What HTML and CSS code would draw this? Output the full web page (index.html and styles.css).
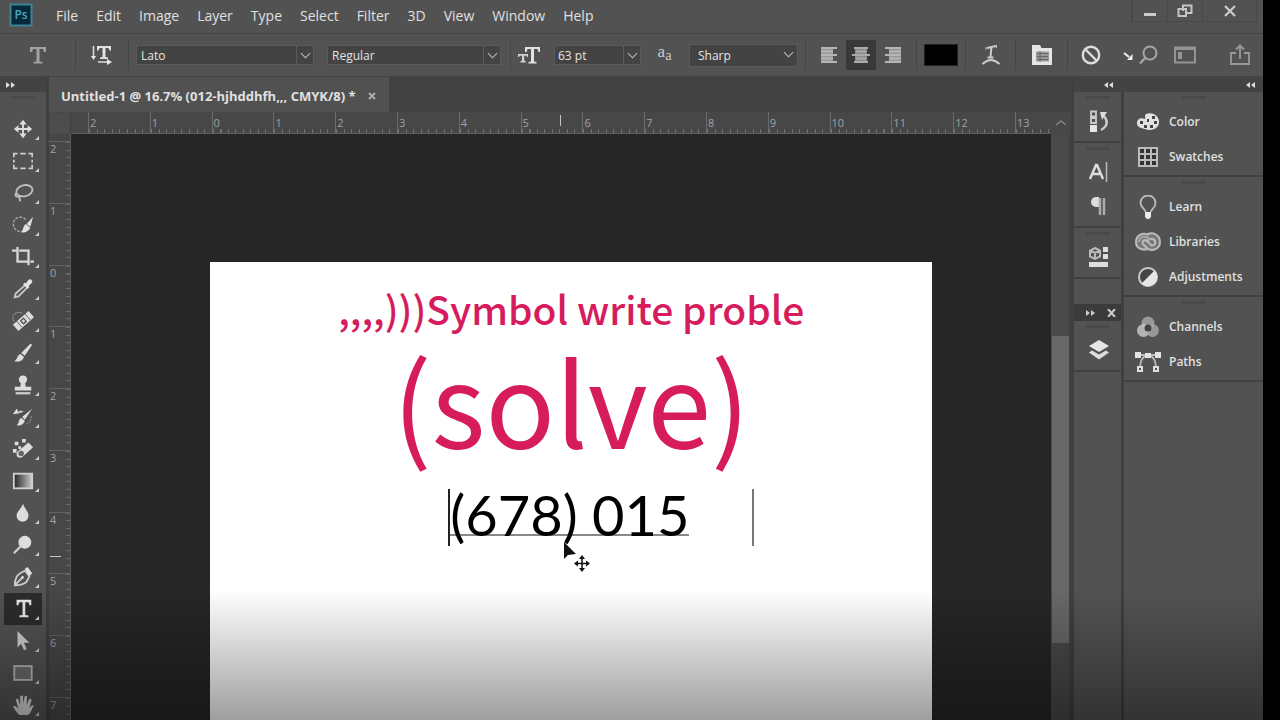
FILE: index.html
```html
<!DOCTYPE html>
<html lang="en">
<head>
<meta charset="utf-8">
<title>Untitled-1 @ 16.7%</title>
<link rel="stylesheet" href="styles.css">
</head>
<body>
<div class="app">
  <header class="menubar">
    <svg class="logo" width="24" height="24" viewBox="0 0 24 24"><rect x="1.500" y="1.500" width="21" height="21" fill="#07283a" stroke="#3d8299" stroke-width="2"/><text x="12" y="16" text-anchor="middle" class="logo-text">Ps</text></svg>
    <nav class="menus">
      <button>File</button><button>Edit</button><button>Image</button><button>Layer</button><button>Type</button><button>Select</button><button>Filter</button><button>3D</button><button>View</button><button>Window</button><button>Help</button>
    </nav>
    <div class="window-buttons">
      <button aria-label="Minimize"><svg width="14" height="14" viewBox="0 0 14 14"><path d="M1 9h12v3H1z" fill="#ccc"/></svg></button>
      <button aria-label="Restore"><svg width="16" height="14" viewBox="0 0 16 14"><path d="M6 7V1.500h8.500V9H10M1.500 5H9v7H1.500z" fill="none" stroke="#c4c4c4" stroke-width="2"/></svg></button>
      <button aria-label="Close"><svg width="14" height="14" viewBox="0 0 14 14"><path d="M2 2l10 10M12 2L2 12" stroke="#ccc" stroke-width="2.200"/></svg></button>
    </div>
  </header>

  <div class="options">
    <div class="cell"><svg width="18" height="20" viewBox="0 0 18 20"><path d="M1 2h16v5h-2L14 4h-3.500v12.500l3 .5v1.500h-9V17l3-.5V4H4L3 7H1z" fill="#a2a2a2"/></svg></div>
    <div class="cell"><svg width="22" height="20" viewBox="0 0 22 20"><path d="M6 1h14v4.500h-1.500L17.500 3H14.500v9l2.500.5V14H9v-1.500l2.500-.5V3h-3l-1 2.500H6z" fill="#e0e0e0"/><path d="M2.500 1v11M7 17h10" stroke="#ddd" stroke-width="1.500"/><path d="M0 11h5l-2.500 4zM16 14l5 3-5 3z" fill="#e8e8e8"/></svg></div>
    <div class="cell plain start"><span class="combo combo-font"><select aria-label="Font family"><option>Lato</option></select><i></i></span></div>
    <div class="cell start"><span class="combo combo-style"><select aria-label="Font style"><option>Regular</option></select><i></i></span></div>
    <div class="cell plain"><svg width="22" height="19" viewBox="0 0 22 19"><path d="M7 1h15v5h-1.500l-1-3H16v12.500l2.500.5v1.500h-8V16l2.500-.5V3H9.500l-1 3H7z" fill="#e2e2e2"/><path d="M0 8h10v3H9L8.500 9.800H6.200v5l1.500.3v1.400H2.500v-1.400l1.500-.3v-5H1.700L1 11H0z" fill="#d0d0d0"/></svg></div>
    <div class="cell plain start"><span class="combo combo-size"><select aria-label="Font size"><option>63 pt</option></select><i></i></span></div>
    <div class="cell plain aa"><span>a</span><sub>a</sub></div>
    <div class="cell start narrow"><span class="combo combo-sharp"><select aria-label="Anti-aliasing"><option>Sharp</option></select><i></i></span></div>
    <div class="cell aligns">
      <button aria-label="Left align"><svg width="18" height="18" viewBox="0 0 18 18"><rect x="1" y="1" width="12" height="16" fill="#999"/><path d="M1 2h16M1 5.500h12M1 9h16M1 12.500h12M1 16h16" stroke="#b5b5b5" stroke-width="2"/></svg></button>
      <button class="on" aria-label="Center align"><svg width="18" height="18" viewBox="0 0 18 18"><rect x="3" y="1" width="12" height="16" fill="#8c8c8c"/><path d="M2 2h14M4 5.500h10M0 9h18M4 12.500h10M2 16h14" stroke="#aaa" stroke-width="2"/></svg></button>
      <button aria-label="Right align"><svg width="18" height="18" viewBox="0 0 18 18"><rect x="5" y="1" width="12" height="16" fill="#999"/><path d="M1 2h16M5 5.500h12M1 9h16M5 12.500h12M1 16h16" stroke="#b5b5b5" stroke-width="2"/></svg></button>
    </div>
    <div class="cell"><button class="swatch" aria-label="Text color"></button></div>
    <div class="cell"><svg width="20" height="22" viewBox="0 0 20 22"><path d="M6 4l9-2M10.500 3l-1 10M6.500 13.500h6" fill="none" stroke="#ccc" stroke-width="2"/><path d="M5 3v3M15.500 1v3" stroke="#bbb"/><path d="M1.500 20q8.500-8 17 0" fill="none" stroke="#ccc" stroke-width="2"/></svg></div>
    <div class="cell"><svg width="22" height="22" viewBox="0 0 22 22"><path d="M1 1h8l1.500 3H21v17H1z" fill="#e6e6e6"/><rect x="5" y="7.500" width="13" height="10" fill="#999"/><path d="M6 9.500h11M6 12.500h11M6 15.500h11M9 7v11" stroke="#666"/></svg></div>
    <div class="cell plain"><svg width="20" height="20" viewBox="0 0 20 20"><circle cx="10" cy="10" r="8.200" fill="none" stroke="#ddd" stroke-width="2.400"/><path d="M4.500 4.500l11 11" stroke="#ddd" stroke-width="2.400"/></svg></div>
    <div class="tail">
      <svg width="10" height="10" viewBox="0 0 10 10"><path d="M1 3l5 4" stroke="#eee" stroke-width="2.200"/><path d="M9.500 4v6H4z" fill="#eee"/></svg>
      <svg width="20" height="20" viewBox="0 0 20 20"><circle cx="12" cy="8" r="6.500" fill="none" stroke="#a5a5a5" stroke-width="2"/><path d="M7.500 12.500L2 18.500" stroke="#a5a5a5" stroke-width="2.500"/></svg>
      <svg class="ws" width="22" height="18" viewBox="0 0 22 18"><rect x="1" y="1.500" width="20" height="15" fill="none" stroke="#949494" stroke-width="2"/><path d="M1 2.500h20" stroke="#949494" stroke-width="3"/><rect x="4" y="6" width="4" height="7" fill="#949494"/></svg>
      <svg class="share" width="20" height="22" viewBox="0 0 20 22"><path d="M6 9H1v11h18V9h-5M10 15V2M6 5.500l4-4 4 4" fill="none" stroke="#999" stroke-width="1.800"/></svg>
    </div>
  </div>

  <div class="workspace">
    <aside class="toolbar">
      <div class="strip"><svg width="9" height="6" viewBox="0 0 9 6"><path d="M0 0l4 3-4 3zM5 0l4 3-4 3z" fill="#ddd"/></svg></div>
      <div class="tools">
        <button aria-label="Move"><svg viewBox="0 0 24 24"><path d="M12 4v16M4 12h16" stroke="#ddd" stroke-width="2"/><path d="M12 2l4 5H8zM12 22l4-5H8zM2 12l5-4v8zM22 12l-5-4v8z" fill="#ddd"/></svg></button>
        <button aria-label="Marquee"><svg viewBox="0 0 24 24"><path d="M2 8V4h4M9 4h6M18 4h4v4M22 10.500v3M22 16v4h-4M15 20H9M6 20H2v-4M2 13.500v-3" fill="none" stroke="#ccc" stroke-width="1.800"/></svg></button>
        <button aria-label="Lasso"><svg viewBox="0 0 24 24"><ellipse cx="13.500" cy="9.500" rx="9" ry="6" transform="rotate(-14 13.500 9.500)" fill="none" stroke="#c0c0c0" stroke-width="2"/><path d="M5 12c-3 3 0 5 3 3M7 15c2 2 1 4 2 6" fill="none" stroke="#c0c0c0" stroke-width="2"/></svg></button>
        <button aria-label="Quick selection"><svg viewBox="0 0 24 24"><path d="M15 6C10 1 1 4 1.500 11c0 6 5 9 10 8" fill="none" stroke="#aaa" stroke-width="1.500" stroke-dasharray="3 1.500"/><path d="M23 3l-3 11-4-3zM15 11l5 4c-2 4-6 6-10 5 2-1 2-7 5-9z" fill="#e2e2e2"/></svg></button>
        <button aria-label="Crop"><svg viewBox="0 0 24 24"><path d="M6 1v16h11M0 5h5M8 5h10v16M20 17h4" fill="none" stroke="#d8d8d8" stroke-width="2.500"/></svg></button>
        <button aria-label="Eyedropper"><svg viewBox="0 0 24 24"><path d="M14 8L4 17l-1 4 4-1 9-9" fill="none" stroke="#c8c8c8" stroke-width="2"/><path d="M12 7l2-2 1 1 3-4c2-2 5 1 4 3l-4 4 1 1-2 2z" fill="#e2e2e2"/></svg></button>
        <button aria-label="Healing brush"><svg viewBox="0 0 24 24"><path d="M2 12c-4-7 4-12 10-8" fill="none" stroke="#aaa" stroke-dasharray="2 1"/><path d="M18 1l6 7L7 23l-6-7z" fill="#ddd"/><path d="M14 4l6 7M5 12l6 7" stroke="#555"/><path d="M12.500 8l4 4.500-4 3.500-4-4z" fill="#555"/><path d="M12.500 10l2 2-2 2-2-2z" fill="#ddd"/></svg></button>
        <button aria-label="Brush"><svg viewBox="0 0 24 24"><path d="M20 2l2 1-8 12-4-3zM9 13l4 3c-1 5-6 6-11 5 4-1 3-6 7-8z" fill="#ddd"/></svg></button>
        <button aria-label="Clone stamp"><svg viewBox="0 0 24 24"><circle cx="12" cy="6" r="4.500" fill="#ddd"/><path d="M10 8h4l1 6h6v4H3v-4h6z" fill="#ddd"/><path d="M4 21h16" stroke="#ccc" stroke-width="2.500"/></svg></button>
        <button aria-label="History brush"><svg viewBox="0 0 24 24"><path d="M22 3l-8 12-3-3zM10 13l4 3c-1 4-5 6-9 5 3-2 2-7 5-8zM1 9l4-6 3 5zM8 5l5 1-5 2z" fill="#ddd"/><path d="M21 11c0 5-2 8-6 9" fill="none" stroke="#999" stroke-dasharray="2 1"/></svg></button>
        <button aria-label="Eraser"><svg viewBox="0 0 24 24"><path d="M18 5l5 5-12 11c-4 2-8-2-5-6z" fill="#ddd"/><circle cx="10" cy="17" r="3" fill="#666"/><path d="M1 12h4v4H1zM3 4h4v4H3zM11 1h4v4h-4zM7 9h3v3H7z" fill="#ddd"/></svg></button>
        <button aria-label="Gradient"><svg viewBox="0 0 24 24"><defs><linearGradient id="g"><stop offset="0" stop-color="#222"/><stop offset="1" stop-color="#ccc"/></linearGradient></defs><rect x="2" y="4" width="20" height="16" fill="url(#g)" stroke="#d0d0d0" stroke-width="2"/></svg></button>
        <button aria-label="Blur"><svg viewBox="0 0 24 24"><path d="M12 2c2 6 6 8 6 13a6.500 6.500 0 0 1-13 0c0-5 5-7 7-13z" fill="#ddd"/></svg></button>
        <button aria-label="Dodge"><svg viewBox="0 0 24 24"><circle cx="14" cy="9" r="7" fill="#ddd"/><path d="M10 13l-8 8" stroke="#ccc" stroke-width="2.500"/></svg></button>
        <button aria-label="Pen"><svg viewBox="0 0 24 24"><path d="M3 21c0-6 1-10 6-13l5-3 5 6-3 6c-3 3-7 4-13 4zM3 21l8-8" fill="none" stroke="#ccc" stroke-width="2"/><path d="M14 3l3-2 5 7-3 3z" fill="#e2e2e2"/><circle cx="11.500" cy="12.500" r="1.500" fill="#ddd"/></svg></button>
        <button class="on" aria-label="Type"><svg viewBox="0 0 24 24"><path d="M5 2h16v6h-2L18 4.500h-3.500v14l3.500.5v2H8v-2l3.500-.5v-14H8L7 8H5z" fill="#e6e6e6"/></svg></button>
        <button aria-label="Path selection"><svg viewBox="0 0 24 24"><path d="M6 1v18l4-4 3 7 3-1-3-7h6z" fill="#d0d0d0"/></svg></button>
        <button aria-label="Rectangle"><svg viewBox="0 0 24 24"><rect x="2.500" y="4.500" width="19" height="15" fill="#6b6b6b" stroke="#bbb" stroke-width="2"/></svg></button>
        <button aria-label="Hand"><svg viewBox="0 0 24 24"><path d="M8 23c-3-3-5-6-7-9 2-2 4 0 6 2L4 6l2.500-1L9 12V2h3v9l2-9 2.500.5L16 12l3-7 2.500 1L19 15l3-3 2 1c-3 3-3 8-7 10z" fill="#d6d6d6"/></svg></button>
      </div>
    </aside>

    <main class="document">
      <div class="tabs">
        <div class="tab"><span>Untitled-1 @ 16.7% (012-hjhddhfh,,, CMYK/8) *</span><button aria-label="Close tab"><svg width="8" height="8" viewBox="0 0 8 8"><path d="M1 1l6 6M7 1L1 7" stroke="#aaa" stroke-width="2"/></svg></button></div>
      </div>
      <div class="view">
        <div class="corner"></div>
        <div class="ruler-x"><span>2</span><span>1</span><span>0</span><span>1</span><span>2</span><span>3</span><span>4</span><span class="cursor-x">5</span><span>6</span><span>7</span><span>8</span><span>9</span><span>10</span><span>11</span><span>12</span><span>13</span></div>
        <div class="scroll-top"><svg width="12" height="6" viewBox="0 0 12 6"><path d="M1 5l5-4 5 4" fill="none" stroke="#858585" stroke-width="1.500"/></svg></div>
        <div class="ruler-y"><span>2</span><span>1</span><span>0</span><span>1</span><span>2</span><span>3</span><span class="cursor-y">4</span><span>5</span><span>6</span><span>7</span></div>
        <div class="canvas">
          <div class="page">
            <p class="headline">,,,,)))Symbol write proble</p>
            <p class="solve">(solve)</p>
            <div class="text-box">
              <span>(678) 015</span>
              <svg class="pointer" width="28" height="34" viewBox="0 0 28 34"><path d="M1 3v17l4-4 8-1z" fill="#111"/><path d="M19 18v13M12.500 24.500h13" stroke="#111" stroke-width="1.500"/><path d="M19 16l3 4h-6zM19 33l3-4h-6zM11 24.500l4-3v6zM27 24.500l-4-3v6z" fill="#111"/></svg>
            </div>
          </div>
        </div>
        <div class="scroll"><div class="thumb"></div></div>
      </div>
    </main>

    <aside class="icon-dock">
      <div class="strip right"><svg width="9" height="6" viewBox="0 0 9 6"><path d="M4 0L0 3l4 3zM9 0L5 3l4 3z" fill="#ddd"/></svg></div>
      <div class="icon-group"><button aria-label="History"><svg width="22" height="24" viewBox="0 0 22 24"><path d="M3 2.500h5v5H3zM3 9h5v5H3z" fill="none" stroke="#ccc" stroke-width="1.800"/><path d="M2 16h7v7H2z" fill="#e6e6e6"/><path d="M13 21c7-4 7-9 3-14" fill="none" stroke="#ccc" stroke-width="2.500"/><path d="M12 3l7 0-5 8z" fill="#ddd"/></svg></button></div>
      <div class="icon-group"><button aria-label="Character"><svg width="22" height="22" viewBox="0 0 22 22"><path d="M2 18L8 4h1l6 14M4.500 13h8" fill="none" stroke="#ddd" stroke-width="2.500"/><path d="M18.500 1v20" stroke="#bbb" stroke-width="1.500"/></svg></button><button aria-label="Paragraph"><svg width="22" height="22" viewBox="0 0 22 22"><path d="M18 2H8a5 5 0 0 0 0 10h3V2z" fill="#ddd"/><path d="M12 3v17M16 3v17" stroke="#aaa" stroke-width="2.500"/></svg></button></div>
      <div class="icon-group"><button aria-label="3D"><svg width="22" height="22" viewBox="0 0 22 22"><path d="M7 2l5 2.500v6L7 13l-5-2.500v-6zM2 4.500L7 7l5-2.500M7 7v6" fill="none" stroke="#bbb" stroke-width="2"/><path d="M15 1h5v5h-5zM15 8h5v5h-5zM1 16h19v5H1z" fill="#ddd"/></svg></button></div>
      <div class="float-head"><svg width="10" height="6" viewBox="0 0 10 6"><path d="M0 0l4 3-4 3zM5 0l4 3-4 3z" fill="#ccc"/></svg><button aria-label="Close panel"><svg width="9" height="8" viewBox="0 0 9 8"><path d="M1 0l7 8M8 0L1 8" stroke="#ccc" stroke-width="2"/></svg></button></div>
      <div class="icon-group"><button aria-label="Layers"><svg width="22" height="22" viewBox="0 0 22 22"><path d="M11 1l10 6-10 6L1 7z" fill="#e6e6e6"/><path d="M1 13.500l3-2 7 4 7-4 3 2-10 7z" fill="#ddd"/></svg></button></div>
    </aside>

    <aside class="panel-dock">
      <div class="strip right"><svg width="9" height="6" viewBox="0 0 9 6"><path d="M4 0L0 3l4 3zM9 0L5 3l4 3z" fill="#ddd"/></svg></div>
      <div class="panel-group">
        <button><svg viewBox="0 0 26 24"><path d="M10 9c1-2-1-3 1-5 7-3 14 3 13 9-1 7-9 8-14 6-3-1-8-1-8-6 0-4 4-6 8-4z" fill="#e2e2e2"/><path d="M5 11h3v3H5zM9 15h3v3H9zM15 15h3v3h-3zM19 11h3v3h-3zM17 6h3v3h-3zM12 9h2v3h-2z" fill="#444"/></svg>Color</button>
        <button><svg viewBox="0 0 26 24"><rect x="3" y="2" width="20" height="20" fill="#bbb"/><path d="M5 4h4v4H5zM11 4h4v4h-4zM17 4h4v4h-4zM5 10h4v4H5zM11 10h4v4h-4zM17 10h4v4h-4zM5 16h4v4H5zM11 16h4v4h-4zM17 16h4v4h-4z" fill="#333"/></svg>Swatches</button>
      </div>
      <div class="panel-group">
        <button><svg viewBox="0 0 26 24"><path d="M10.500 17c0-3-5-4-5-9a7.500 7.500 0 0 1 15 0c0 5-4.500 6-4.500 9" fill="none" stroke="#bbb" stroke-width="1.800"/><path d="M10 17h6v5l-2 2h-2l-2-2z" fill="#eee"/></svg>Learn</button>
        <button><svg viewBox="0 0 26 24"><rect x="1" y="4" width="24" height="17" rx="8.500" fill="#777"/><path d="M13 4c5-2 12 1 12 8s-8 10-13 6l-4-4c-2-3 2-5 4-3l4 4c4 2 6-4 2-6-3-1-5 0-7 3" fill="none" stroke="#bbb" stroke-width="2"/><path d="M14 5C8 2 1 5 1 12s8 9 12 6" fill="none" stroke="#bbb" stroke-width="2"/><path d="M4 12c0-6 8-7 11-2" fill="none" stroke="#aaa" stroke-width="2"/></svg>Libraries</button>
        <button><svg viewBox="0 0 26 24"><circle cx="13" cy="12" r="9" fill="#444" stroke="#ccc" stroke-width="2"/><path d="M19.500 5.500a9 9 0 0 1-13 13z" fill="#e6e6e6"/></svg>Adjustments</button>
      </div>
      <div class="panel-group">
        <button><svg viewBox="0 0 26 24"><circle cx="13" cy="8" r="6.500" fill="#999"/><circle cx="8.500" cy="15.500" r="6.500" fill="#ccc" opacity=".8"/><circle cx="17.500" cy="15.500" r="6.500" fill="#aaa" opacity=".8"/><circle cx="13" cy="13" r="3.500" fill="#444"/></svg>Channels</button>
        <button><svg viewBox="0 0 26 24"><path d="M2 5h22M5 18C5 11 8 6 13 5c5 1 8 6 8 13" fill="none" stroke="#bbb" stroke-width="1.800"/><path d="M0 2h6v6H0zM20 2h6v6h-6zM10 3h6v5h-6z" fill="#e2e2e2"/><path d="M3 17h4v4H3zM19 17h4v4h-4z" fill="#555" stroke="#ddd" stroke-width="2"/></svg>Paths</button>
      </div>
    </aside>
  </div>
  <div class="shade"></div>
</div>
</body>
</html>
```
FILE: styles.css
```css
* { box-sizing: border-box; }
body {
  margin: 0;
  background: #000;
  color: #e0e0e0;
  font-family: "Open Sans", "Noto Sans", sans-serif;
}
button {
  margin: 0;
  padding: 0;
  border: 0;
  background: none;
  color: inherit;
  font: inherit;
}
p { margin: 0; }
svg { flex: none; display: block; }

.app {
  position: relative;
  display: flex;
  flex-direction: column;
  height: 100vh;
  margin-right: 17px;
  overflow: hidden;
  background: #525252;
}
.shade {
  position: absolute;
  inset: auto 0 0 0;
  height: 18vh;
  background: linear-gradient(transparent, rgba(0, 0, 0, .38));
  pointer-events: none;
}

/* Menu bar */
.menubar {
  display: flex;
  flex: none;
  height: 34px;
  padding-left: 9px;
  border-bottom: 1px solid #434343;
}
.logo { margin-top: 3px; }
.logo-text { font: 600 12px "Open Sans", sans-serif; fill: #4aa6bd; }
.menus {
  display: flex;
  gap: 18px;
  height: 30px;
  margin-left: 23px;
  font-size: 14px;
  font-weight: 500;
}
.window-buttons {
  display: flex;
  height: 22px;
  margin: 0 6px 0 auto;
  border: 1px solid #494949;
  border-top: 0;
}
.window-buttons button {
  display: flex;
  align-items: center;
  justify-content: center;
  width: 35px;
  border-left: 1px solid #494949;
}
.window-buttons button:last-child { width: 54px; }

/* Options bar */
.options {
  display: grid;
  grid-template-columns: 76px 53px 191px 191px 36px 97px 41px 121px 111px 49px 50px 52px 45px 1fr;
  flex: none;
  height: 43px;
  padding: 6px 0;
  border-bottom: 1px solid #444;
}
.cell {
  display: flex;
  align-items: center;
  justify-content: center;
  border-right: 1px solid #454545;
}
.cell.plain { border-right: 0; }
.cell.start { justify-content: flex-start; padding-left: 7px; }
.cell.narrow { padding-left: 4px; }
.combo { position: relative; display: flex; height: 20px; }
.combo select {
  width: 100%;
  padding: 0 4px;
  border: 1px solid #5b5b5b;
  border-radius: 0;
  appearance: none;
  background: #434343;
  color: #e4e4e4;
  font: 500 12px "Open Sans", sans-serif;
}
.combo i {
  position: absolute;
  inset: 1px 1px 1px auto;
  width: 17px;
  border-left: 1px solid #5c5c5c;
  pointer-events: none;
}
.combo i::after {
  content: "";
  position: absolute;
  left: 5px;
  top: 4px;
  width: 6px;
  height: 6px;
  border: solid #bbb;
  border-width: 0 1px 1px 0;
  transform: rotate(45deg);
}
.combo-font { width: 178px; }
.combo-style { width: 174px; }
.combo-size { width: 87px; }
.combo-sharp { width: 109px; height: 23px; }
.combo-size select { padding: 0 3px; }
.combo-sharp select { padding: 0 8px; }
.combo-sharp i { border: 0; }
.aa { color: #ccc; font: 17px "Liberation Serif", serif; }
.aa span { margin-bottom: 6px; }
.aa sub { line-height: 1; }
.aligns { gap: 2px; }
.aligns button {
  display: flex;
  align-items: center;
  justify-content: center;
  width: 30px;
  height: 30px;
}
.aligns .on { background: #393939; }
.swatch { width: 34px; height: 22px; background: #000; border: 1px solid #222; }
.tail { display: flex; align-items: center; padding-left: 10px; gap: 5px; }
.ws { margin-left: 11px; }
.share { margin-left: auto; margin-right: 13px; }

/* Workspace */
.workspace { display: flex; flex: 1; min-height: 0; background: #3f3f3f; }
.strip {
  display: flex;
  flex: none;
  align-items: center;
  height: 15px;
  padding: 0 6px;
  background: #434343;
}
.strip.right { justify-content: flex-end; padding-right: 8px; }

.toolbar { flex: none; width: 46px; margin-right: 3px; background: #525252; }
.tools { display: flex; flex-direction: column; padding-top: 21px; position: relative; }
.tools::before, .icon-group::before, .panel-group::before {
  content: "";
  position: absolute;
  top: 4px;
  left: calc(50% - 12px);
  width: 24px;
  height: 3px;
  background: #4a4a4a;
}
.tools button {
  position: relative;
  flex: none;
  display: flex;
  align-items: center;
  width: 38px;
  height: 32px;
  margin-left: 4px;
  padding-left: 8px;
}
.tools svg { width: 22px; height: 22px; }
.tools button::after {
  content: "";
  position: absolute;
  right: 3px;
  bottom: 5px;
  border: solid transparent;
  border-width: 2px;
  border-right-color: #ccc;
  border-bottom-color: #ccc;
}
.tools .on { background: #2b2b2b; }

/* Document */
.document { display: flex; flex: 1; flex-direction: column; min-width: 0; }
.tabs { display: flex; flex: none; height: 35px; background: #424242; }
.tab {
  display: flex;
  align-items: center;
  gap: 12px;
  padding: 2px 13px 0 12px;
  background: #515151;
  font-size: 13px;
  font-weight: 700;
}
.view {
  display: grid;
  grid-template-columns: 22px 1fr 20px;
  grid-template-rows: 22px 1fr;
  flex: 1;
  min-height: 0;
}
.corner { background: #4d4d4d; border: 1px solid #484848; border-right-color: #3e3e3e; }
.ruler-x, .ruler-y {
  display: flex;
  overflow: hidden;
  background: #474747;
  color: #a2a2a2;
  font-size: 11px;
}
.ruler-x { padding-left: 17px; border-bottom: 1px solid #5d5d5d; }
.ruler-x span {
  position: relative;
  flex: 1;
  padding: 4px 0 0 1px;
  border-left: 1px solid #6c6c6c;
  line-height: 14px;
  background: repeating-linear-gradient(90deg, #717171 0 1px, transparent 1px 12.5%) bottom / 100% 4px no-repeat;
}
.ruler-x span:last-child {
  flex: 0 0 36px;
  background-image: repeating-linear-gradient(90deg, #717171 0 1px, transparent 1px 8px);
}
.ruler-y { flex-direction: column; padding-top: 7px; border-right: 1px solid #5d5d5d; }
.ruler-y span {
  position: relative;
  flex: 1;
  padding-left: 1px;
  border-top: 1px solid #626262;
  line-height: 13px;
  background: repeating-linear-gradient(#6a6a6a 0 1px, transparent 1px 12.5%) right / 4px 100% no-repeat;
}
.ruler-y span:last-child {
  flex: 0 0 23px;
  background-image: repeating-linear-gradient(#6a6a6a 0 1px, transparent 1px 8px);
}
.cursor-x::after, .cursor-y::after { content: ""; position: absolute; background: #c4c4c4; }
.cursor-x::after { left: 63%; top: 3px; width: 1px; height: 11px; }
.cursor-y::after { top: 72%; left: 1px; width: 11px; height: 1px; }
.scroll-top {
  display: flex;
  align-items: center;
  justify-content: center;
  background: #484848;
}
.canvas { overflow: hidden; padding: 128px 12.1% 0 14.2%; background: #262626; }
.page { display: flex; flex-direction: column; align-items: center; height: 100%; background: #fff; }
.headline, .solve { color: #d61c5c; font-family: "Noto Sans CJK SC", sans-serif; }
.headline { margin-top: 16px; font-size: 39px; line-height: 60px; font-weight: 500; }
.solve { font-size: 115px; line-height: 122px; }
.text-box {
  position: relative;
  width: 306px;
  height: 57px;
  margin: 29px 0 0 60px;
  border-left: 2px solid #222;
  border-right: 2px solid #777;
  color: #000;
  font: 56px/52px Lato, sans-serif;
}
.text-box span {
  display: inline-block;
  height: 47px;
  border-bottom: 2px solid #888;
}
.pointer { position: absolute; left: 113px; top: 50px; }
.scroll { display: flex; background: #494949; padding: 0 0 0 1px; border-right: 2px solid #414141; }
.thumb { width: 100%; height: 52.4%; margin-top: 202px; background: #676767; }

/* Docks */
.icon-dock {
  display: flex;
  flex: none;
  flex-direction: column;
  width: 50px;
  margin-left: 3px;
  border-right: 3px solid #3f3f3f;
  background: #525252;
}
.icon-dock .strip { margin-right: -3px; padding-right: 11px; }
.icon-group {
  position: relative;
  padding: 12px 0 3px;
  border-bottom: 2px solid #414141;
}
.icon-group button {
  display: flex;
  align-items: center;
  justify-content: center;
  width: 100%;
  height: 34px;
  padding-left: 3px;
}
.float-head {
  display: flex;
  align-items: center;
  justify-content: space-between;
  height: 17px;
  margin-top: 25px;
  padding: 0 5px 0 12px;
  background: #3b3b3b;
}
.panel-dock { flex: none; width: 139px; background: #525252; }
.panel-group {
  position: relative;
  padding: 12px 0 1px;
  border-bottom: 2px solid #414141;
}
.panel-group button {
  display: flex;
  align-items: center;
  gap: 8px;
  width: 100%;
  height: 35px;
  padding-left: 11px;
  font-size: 12px;
  font-weight: 600;
}
.panel-group svg { width: 26px; height: 24px; }
```
